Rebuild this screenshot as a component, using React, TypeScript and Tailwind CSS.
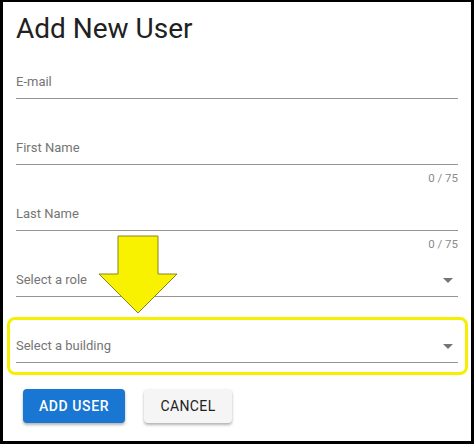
import { ReactNode } from "react";

function Caret() {
  return (
    <svg width="10" height="5" viewBox="0 0 10 5" className="shrink-0">
      <path d="M0 0 L10 0 L5 5 Z" fill="#757575" />
    </svg>
  );
}

function Field({ label, helper, select, last }: { label: string; helper?: string; select?: boolean; last?: boolean }) {
  return (
    <div className="flex flex-col">
      <div className="flex h-[33px] items-center justify-between border-b border-[#949494] pr-[5px]">
        <span className="text-[13px] text-[#757575]">{label}</span>
        {select && <Caret />}
      </div>
      {!last && (
        <div className="flex h-[33px] justify-end pt-[6px] text-[11.5px] leading-[14px] text-[#8a8a8a]">
          {helper}
        </div>
      )}
    </div>
  );
}

function Btn({ children, primary }: { children: ReactNode; primary?: boolean }) {
  return (
    <button
      className={
        primary
          ? "h-[34px] w-[102px] rounded-[4px] bg-[#1976d2] text-[14px] font-medium tracking-[0.6px] text-white shadow-[0_2px_3px_rgba(0,0,0,0.3)]"
          : "h-[34px] w-[88px] rounded-[4px] bg-[#f5f5f5] text-[14px] tracking-[0.4px] text-[#222] shadow-[0_2px_3px_rgba(0,0,0,0.3)]"
      }
    >
      {children}
    </button>
  );
}

export default function App() {
  return (
    <div className="relative h-[444px] w-[474px] bg-white font-['Roboto',sans-serif]">
      <div className="flex h-full flex-col border-b-[3px] border-l-[3px] border-r-[3px] border-t-2 border-black px-[13px]">
        <h1 className="mt-[11px] text-[28px] leading-[32px] text-[#212121]">Add New User</h1>
        <div className="mt-[21px] flex flex-col">
          <Field label="E-mail" />
          <Field label="First Name" helper="0 / 75" />
          <Field label="Last Name" helper="0 / 75" />
          <Field label="Select a role" select />
          <Field label="Select a building" select last />
        </div>
        <div className="ml-[7px] mt-[26px] flex gap-[19px]">
          <Btn primary>ADD USER</Btn>
          <Btn>CANCEL</Btn>
        </div>
      </div>

      <div className="pointer-events-none absolute left-[7px] top-[317px] h-[58px] w-[461px] rounded-[8px] border-[3px] border-[#f6f000]" />

      <svg className="pointer-events-none absolute left-0 top-0" width="474" height="444" viewBox="0 0 474 444">
        <path
          d="M118 236 L158 236 L158 274 L177 274 L138 313 L99 274 L118 274 Z"
          fill="#f8f200"
          stroke="#8a8420"
          strokeWidth="1"
          strokeLinejoin="miter"
        />
      </svg>
    </div>
  );
}
